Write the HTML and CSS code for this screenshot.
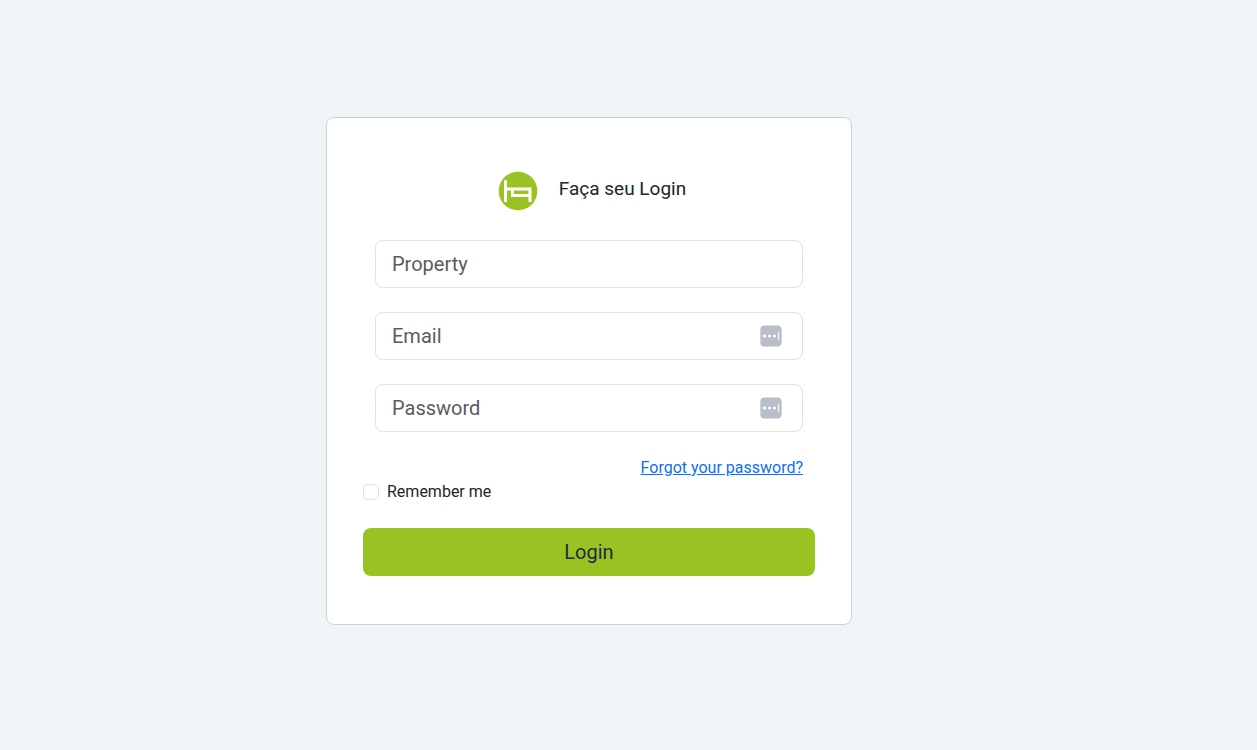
FILE: index.html
```html
<!DOCTYPE html>
<html lang="pt-br">
<head>
    <meta charset="UTF-8">
    <meta name="viewport" content="width=device-width, initial-scale=1.0">
    <title>Login</title>
    <link rel="stylesheet" href="styles.css">
</head>
<body>
    <main class="page">
        <form class="card">
            <div class="card-header">
                <svg class="logo" viewBox="0 0 40 40" aria-hidden="true">
                    <circle cx="20" cy="20" r="19.3" fill="#99c322"/>
                    <path d="M7.5 9.3V31M7.5 18H33.5M32 18V31M14.5 18V24.5H32" fill="none" stroke="#fff" stroke-width="3"/>
                </svg>
                <h1>Faça seu Login</h1>
            </div>
            <div class="field">
                <input type="text" id="property" placeholder="Property" aria-label="Property">
            </div>
            <div class="field">
                <input type="email" id="email" placeholder="Email" aria-label="Email">
                <svg class="field-icon" viewBox="0 0 22 22" aria-hidden="true">
                    <rect x="0.4" y="0.4" width="21.2" height="21.2" rx="4" fill="#b8bfca"/>
                    <g fill="#fff">
                        <circle cx="4.5" cy="11" r="1.6"/>
                        <circle cx="9.5" cy="11" r="1.6"/>
                        <circle cx="14.5" cy="11" r="1.6"/>
                        <rect x="18" y="7" width="1.2" height="8"/>
                    </g>
                </svg>
            </div>
            <div class="field">
                <input type="password" id="password" placeholder="Password" aria-label="Password">
                <svg class="field-icon" viewBox="0 0 22 22" aria-hidden="true">
                    <rect x="0.4" y="0.4" width="21.2" height="21.2" rx="4" fill="#b8bfca"/>
                    <g fill="#fff">
                        <circle cx="4.5" cy="11" r="1.6"/>
                        <circle cx="9.5" cy="11" r="1.6"/>
                        <circle cx="14.5" cy="11" r="1.6"/>
                        <rect x="18" y="7" width="1.2" height="8"/>
                    </g>
                </svg>
            </div>
            <div class="forgot">
                <a href="#">Forgot your password?</a>
            </div>
            <div class="remember">
                <input type="checkbox" id="remember">
                <label for="remember">Remember me</label>
            </div>
            <button type="submit" class="btn-login">Login</button>
        </form>
    </main>
</body>
</html>
```
FILE: styles.css
```css
* {
    box-sizing: border-box;
}
body {
    margin: 0;
    font-family: Roboto, "Liberation Sans", sans-serif;
    font-size: 16px;
    line-height: 24px;
    color: #212529;
    background-color: #eff5f7;
}
.page {
    display: flex;
    align-items: center;
    justify-content: center;
    min-height: 100vh;
    padding: 0 79px 8px 0;
}
.card {
    width: 100%;
    max-width: 526px;
    padding: 48px 36px;
    background-color: #fff;
    border: 1px solid #cfd2d4;
    border-radius: 8px;
}
.card-header {
    display: flex;
    justify-content: center;
    gap: 21px;
    padding: 5px 0 29px 6px;
}
.card-header h1 {
    margin: 6px 0 0;
    font-size: 19px;
    font-weight: 400;
    line-height: 24px;
}
.logo {
    width: 40px;
    height: 40px;
}
.field {
    position: relative;
    margin: 0 12px 24px;
}
.field input {
    display: block;
    width: 100%;
    height: 48px;
    padding: 8px 16px;
    font-family: inherit;
    font-size: 20px;
    color: #212529;
    background-color: #fff;
    border: 1px solid #dee2e6;
    border-radius: 8px;
}
.field input::placeholder {
    color: #595c5f;
    opacity: 1;
}
/* sits over the right end of the input */
.field-icon {
    position: absolute;
    top: 13px;
    right: 21px;
    width: 22px;
    height: 22px;
}
.forgot {
    margin: 0 12px;
    text-align: right;
}
.forgot a {
    color: #0d6efd;
}
.remember {
    display: flex;
    align-items: center;
    gap: 8px;
    margin-bottom: 24px;
}
.remember input {
    appearance: none;
    width: 16px;
    height: 16px;
    margin: 0;
    border: 1px solid #dee2e6;
    border-radius: 4px;
}
.remember input:checked {
    background-color: #99c322;
    border-color: #99c322;
}
.btn-login {
    display: block;
    width: 100%;
    height: 48px;
    font-family: inherit;
    font-size: 20px;
    color: #212945;
    background-color: #99c322;
    border: none;
    border-radius: 8px;
    cursor: pointer;
}
```
